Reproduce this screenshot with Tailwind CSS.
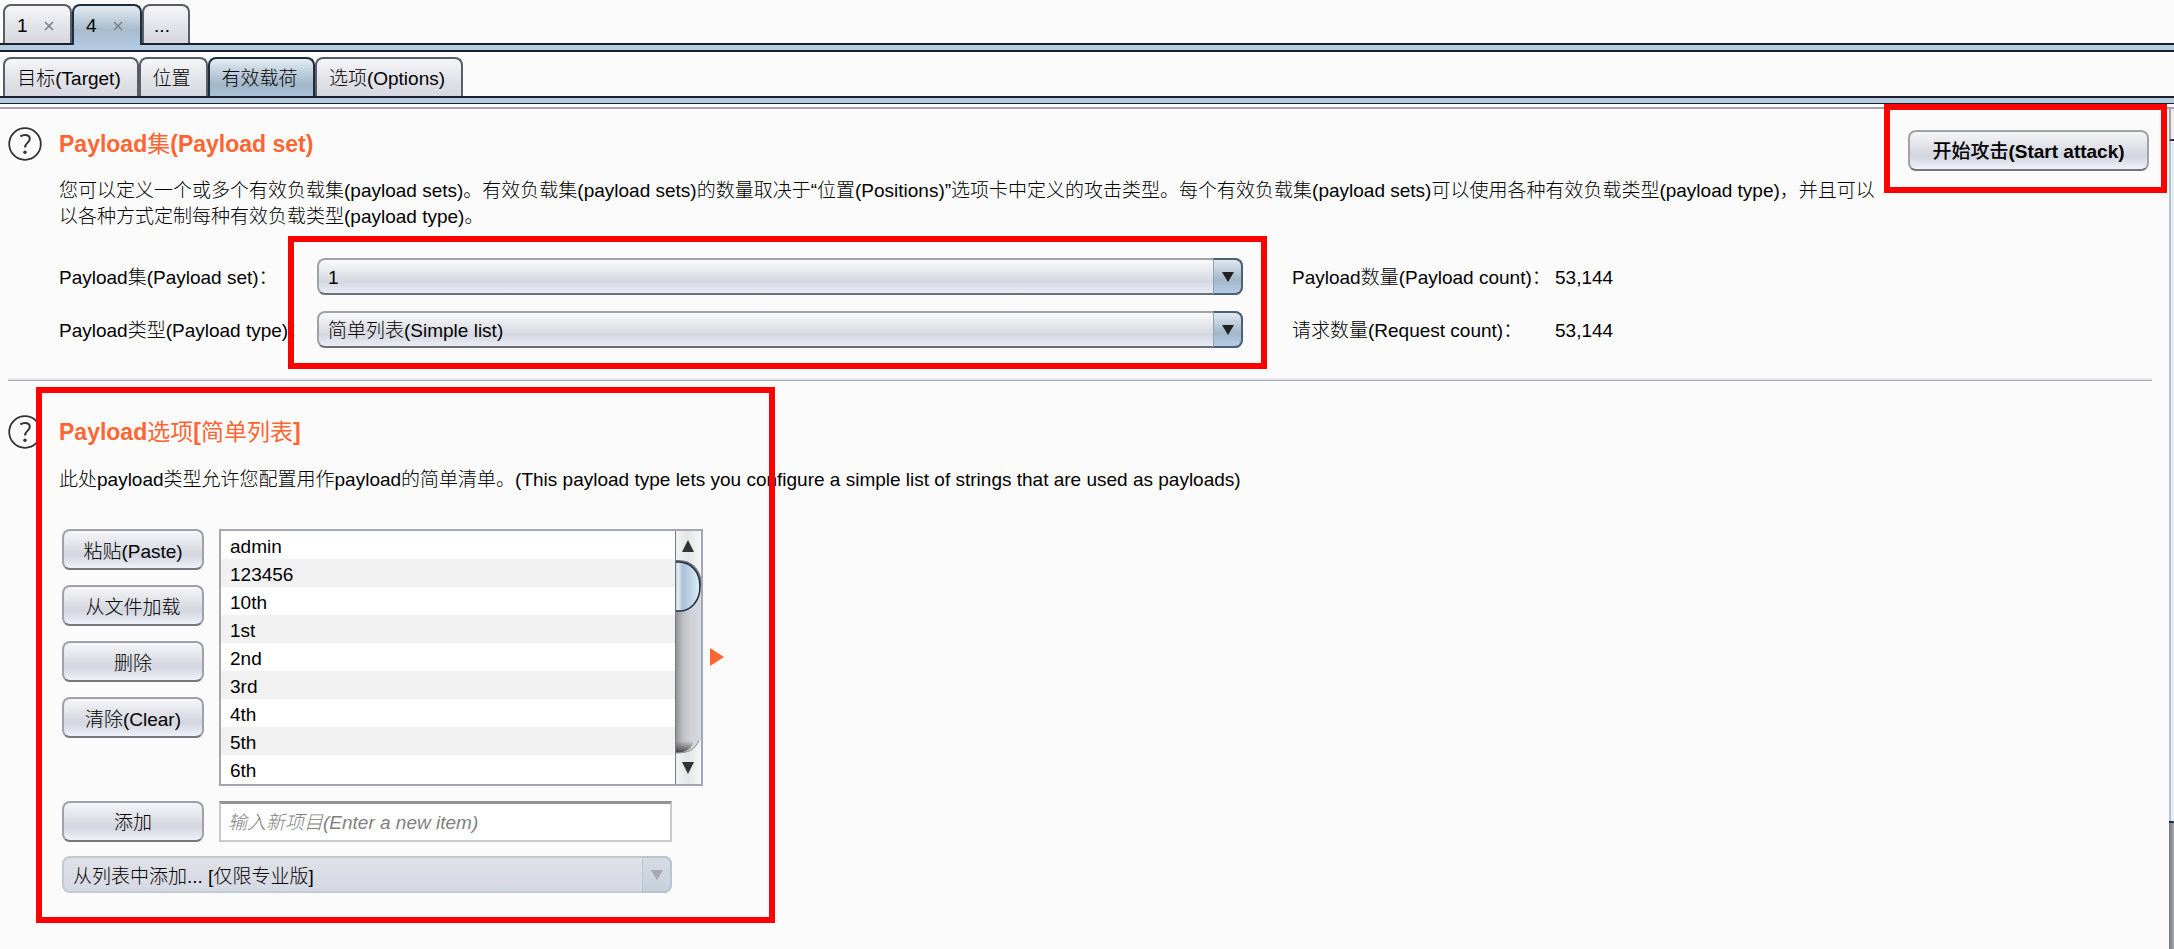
<!DOCTYPE html>
<html lang="zh-CN">
<head>
    <meta charset="UTF-8">
    <meta name="viewport" content="width=device-width, initial-scale=1.0">
    <title>Intruder - Payloads</title>
    <script src="https://cdn.jsdelivr.net/npm/@tailwindcss/browser@4"></script>
    <style>
        body {
            font-family: 'Liberation Sans', 'Noto Sans CJK SC', sans-serif;
        }
    </style>
</head>
<body class="min-h-screen flex flex-col bg-[#fbfbfb] text-black text-[19px] leading-[26px] font-light">
    <!-- Attack tabs -->
    <nav class="flex pt-1 pl-[3px]">
        <button class="h-[39px] w-[69px] flex items-center pl-[12px] pt-[2px] gap-[16px] rounded-t-lg border-2 border-b-0 border-[#5a5c66] bg-linear-to-b from-[#f6f6f8] via-[#e4e5ea] to-[#d6d8df]">
            1
            <svg class="w-[10px] h-[10px]" viewBox="0 0 10 10" stroke="#808080" stroke-width="1.6"><path d="M1 1L9 9M9 1L1 9"/></svg>
        </button>
        <button class="h-[41px] w-[70px] -mb-[2px] relative z-10 flex items-center pl-[12px] gap-[16px] rounded-t-lg border-2 border-b-0 border-[#1c2d40] bg-linear-to-b from-[#e3ebf1] via-[#a9bccd] via-60% to-[#b1c7df]">
            4
            <svg class="w-[10px] h-[10px]" viewBox="0 0 10 10" stroke="#808080" stroke-width="1.6"><path d="M1 1L9 9M9 1L1 9"/></svg>
        </button>
        <button class="h-[39px] w-[48px] flex items-center justify-center pr-2 pt-[2px] rounded-t-lg border-2 border-b-0 border-[#5a5c66] bg-linear-to-b from-[#f6f6f8] via-[#e4e5ea] to-[#d6d8df]">...</button>
    </nav>
    <div class="h-[9px] border-y-2 border-t-[#1a1d2c] border-b-[#1a1d2c] bg-[#b5cce0]"></div>

    <!-- Section tabs -->
    <nav class="flex pt-[5px] pl-[3px]">
        <button class="h-[39px] w-[136px] pt-[2px] pr-1 rounded-t-lg border-2 border-b-0 border-[#5a5c66] bg-linear-to-b from-[#f6f6f8] via-[#e4e5ea] to-[#d6d8df]">目标(Target)</button>
        <button class="h-[39px] w-[69px] pt-[2px] pr-1 rounded-t-lg border-2 border-b-0 border-[#5a5c66] bg-linear-to-b from-[#f6f6f8] via-[#e4e5ea] to-[#d6d8df]">位置</button>
        <button class="h-[39px] w-[107px] pt-[2px] pr-1 rounded-t-lg border-2 border-b-0 border-[#1c2d40] bg-linear-to-b from-[#e3ebf1] via-[#a1b6c9] via-70% to-[#a9c0d6]">有效载荷</button>
        <button class="h-[39px] w-[148px] pt-[2px] pr-1 rounded-t-lg border-2 border-b-0 border-[#5a5c66] bg-linear-to-b from-[#f6f6f8] via-[#e4e5ea] to-[#d6d8df]">选项(Options)</button>
    </nav>
    <div class="h-[8px] border-t-2 border-b border-[#1a1d2c] bg-[#b5cce0]"></div>
    <div class="h-[5px] border-b-2 border-[#a3a3b3] bg-white"></div>

    <div class="flex-1 flex">
        <main class="flex-1 min-w-0 pl-2">
            <!-- Payload sets -->
            <section class="flex">
                <svg class="w-[34px] h-[34px] mt-[18px] shrink-0" viewBox="0 0 34 34" fill="none" stroke="#333">
                    <circle cx="17" cy="17" r="15.8" stroke-width="1.8"/>
                    <path d="M12.3 9.4C14 8.4 15.400 8 17 8C20 8 21.800 9.500 21.800 12C21.800 15.600 17 15.800 17 20.500" stroke-width="2"/>
                    <circle cx="17" cy="25.200" r="1.700" fill="#333" stroke="none"/>
                </svg>
                <div class="flex-1 min-w-0 ml-[17px] pt-[18px]">
                    <h2 class="text-[23px] leading-[34px] font-bold text-[#ff6633]">Payload<span class="font-normal">集</span>(Payload set)</h2>
                    <p class="mt-[17px]">您可以定义一个或多个有效负载集(payload sets)。有效负载集(payload sets)的数量取决于“位置(Positions)”选项卡中定义的攻击类型。每个有效负载集(payload sets)可以使用各种有效负载类型(payload type)，并且可以以各种方式定制每种有效负载类型(payload type)。</p>
                    <div class="flex mt-[28px]">
                        <div class="w-[258px] shrink-0 flex flex-col gap-4 whitespace-nowrap">
                            <label for="payloadSet" class="h-[37px] flex items-center pt-[3px]">Payload集(Payload set)：</label>
                            <label for="payloadType" class="h-[37px] flex items-center pt-[3px]">Payload类型(Payload type)：</label>
                        </div>
                        <div class="relative flex-1 max-w-[926px] flex flex-col gap-4">
                            <div class="relative h-[37px]">
                                <select id="payloadSet" class="appearance-none w-full h-full pl-[9px] pt-[3px] rounded-lg border-2 border-[#a0a2a9] border-b-[#6c6f77] bg-linear-to-b from-[#fafafb] via-[#d5d8e0] via-65% to-[#e9ebf6]">
                                    <option>1</option>
                                </select>
                                <div class="absolute right-0 inset-y-0 w-[30px] flex items-center justify-center pointer-events-none rounded-r-lg border-2 border-l border-[#4b6177] border-l-[#8fa3b5] bg-linear-to-b from-[#e0e9ef] via-[#a3b7c9] via-60% to-[#b5cce4]">
                                    <svg class="w-[12px] h-[10px]" viewBox="0 0 12 10"><path d="M0 0H12L6 10Z" fill="#222"/></svg>
                                </div>
                            </div>
                            <div class="relative h-[37px]">
                                <select id="payloadType" class="appearance-none w-full h-full pl-[9px] pt-[3px] rounded-lg border-2 border-[#a0a2a9] border-b-[#6c6f77] bg-linear-to-b from-[#fafafb] via-[#d5d8e0] via-65% to-[#e9ebf6]">
                                    <option>简单列表(Simple list)</option>
                                </select>
                                <div class="absolute right-0 inset-y-0 w-[30px] flex items-center justify-center pointer-events-none rounded-r-lg border-2 border-l border-[#4b6177] border-l-[#8fa3b5] bg-linear-to-b from-[#e0e9ef] via-[#a3b7c9] via-60% to-[#b5cce4]">
                                    <svg class="w-[12px] h-[10px]" viewBox="0 0 12 10"><path d="M0 0H12L6 10Z" fill="#222"/></svg>
                                </div>
                            </div>
                            <!-- Highlight -->
                            <div class="absolute -left-[29px] -right-[24px] -top-[22px] -bottom-[21px] border-6 border-[#ff0000] pointer-events-none"></div>
                        </div>
                        <dl class="ml-[49px] grid grid-cols-[263px_auto] gap-y-4 whitespace-nowrap">
                            <dt class="h-[37px] flex items-center pt-[3px]">Payload数量(Payload count)：</dt>
                            <dd class="h-[37px] flex items-center pt-[3px]">53,144</dd>
                            <dt class="h-[37px] flex items-center pt-[3px]">请求数量(Request count)：</dt>
                            <dd class="h-[37px] flex items-center pt-[3px]">53,144</dd>
                        </dl>
                    </div>
                </div>
                <div class="relative shrink-0 self-start mt-[21px] ml-[32px] mr-[20px]">
                    <button class="w-[241px] h-[41px] pt-[3px] font-bold rounded-lg border-2 border-[#a0a2a9] border-b-[#75777d] bg-linear-to-b from-[#f5f5f7] via-[#d3d6de] via-65% to-[#eff1fb]"><span class="font-medium">开始攻击</span>(Start attack)</button>
                    <!-- Highlight -->
                    <div class="absolute -left-[24px] -right-[18px] -top-[26px] -bottom-[22px] border-6 border-[#ff0000] pointer-events-none"></div>
                </div>
            </section>

            <hr class="mt-[30px] mr-[17px] h-[3px] border-t-2 border-b border-t-[#e6e7ea] border-b-[#a2a5b0]">

            <!-- Payload options -->
            <section class="flex pt-[34px]">
                <svg class="w-[34px] h-[34px] shrink-0" viewBox="0 0 34 34" fill="none" stroke="#333">
                    <circle cx="17" cy="17" r="15.8" stroke-width="1.8"/>
                    <path d="M12.3 9.4C14 8.4 15.400 8 17 8C20 8 21.800 9.500 21.800 12C21.800 15.600 17 15.800 17 20.500" stroke-width="2"/>
                    <circle cx="17" cy="25.200" r="1.700" fill="#333" stroke="none"/>
                </svg>
                <div class="relative flex-1 ml-[17px]">
                    <h2 class="text-[23px] leading-[34px] font-bold text-[#ff6633]">Payload<span class="font-normal">选项</span>[<span class="font-normal">简单列表</span>]</h2>
                    <p class="mt-[18px]">此处payload类型允许您配置用作payload的简单清单。(This payload type lets you configure a simple list of strings that are used as payloads)</p>

                    <div class="flex mt-[36px] ml-[3px]">
                        <div class="flex flex-col gap-[15px] w-[142px]">
                            <button class="h-[41px] pt-1 rounded-lg border-2 border-[#a0a2a9] border-b-[#75777d] bg-linear-to-b from-[#f5f5f7] via-[#d3d6de] via-65% to-[#eff1fb]">粘贴(Paste)</button>
                            <button class="h-[41px] pt-1 rounded-lg border-2 border-[#a0a2a9] border-b-[#75777d] bg-linear-to-b from-[#f5f5f7] via-[#d3d6de] via-65% to-[#eff1fb]">从文件加载</button>
                            <button class="h-[41px] pt-1 rounded-lg border-2 border-[#a0a2a9] border-b-[#75777d] bg-linear-to-b from-[#f5f5f7] via-[#d3d6de] via-65% to-[#eff1fb]">删除</button>
                            <button class="h-[41px] pt-1 rounded-lg border-2 border-[#a0a2a9] border-b-[#75777d] bg-linear-to-b from-[#f5f5f7] via-[#d3d6de] via-65% to-[#eff1fb]">清除(Clear)</button>
                        </div>
                        <div class="ml-[15px] w-[484px] h-[257px] flex border-2 border-[#a2a7b3] bg-white">
                            <ul class="flex-1 leading-[28px] overflow-hidden">
                                <li class="h-[28px] pl-[9px] pt-[2px]">admin</li>
                                <li class="h-[28px] pl-[9px] pt-[2px] bg-[#f1f1f1]">123456</li>
                                <li class="h-[28px] pl-[9px] pt-[2px]">10th</li>
                                <li class="h-[28px] pl-[9px] pt-[2px] bg-[#f1f1f1]">1st</li>
                                <li class="h-[28px] pl-[9px] pt-[2px]">2nd</li>
                                <li class="h-[28px] pl-[9px] pt-[2px] bg-[#f1f1f1]">3rd</li>
                                <li class="h-[28px] pl-[9px] pt-[2px]">4th</li>
                                <li class="h-[28px] pl-[9px] pt-[2px] bg-[#f1f1f1]">5th</li>
                                <li class="h-[28px] pl-[9px] pt-[2px]">6th</li>
                            </ul>
                            <!-- List scrollbar -->
                            <svg class="w-[26px] h-[253px] shrink-0" viewBox="0 0 26 253">
                                <defs>
                                    <linearGradient id="track"><stop offset="0" stop-color="#8c8d91"/><stop offset=".3" stop-color="#bfc0c4"/><stop offset=".6" stop-color="#d0d1d6"/><stop offset="1" stop-color="#d5d9e3"/></linearGradient>
                                    <linearGradient id="thumb"><stop offset="0" stop-color="#a4b9cf"/><stop offset=".12" stop-color="#e8f0f6"/><stop offset=".3" stop-color="#acc1d6"/><stop offset=".65" stop-color="#c2d5e6"/><stop offset="1" stop-color="#e2f2fb"/></linearGradient>
                                    <linearGradient id="arrowBtn"><stop offset="0" stop-color="#f3f4f5"/><stop offset=".5" stop-color="#e3e5e7"/><stop offset="1" stop-color="#f4f6f8"/></linearGradient>
                                    <linearGradient id="shade" x1="0" y1="0" x2="0" y2="1"><stop offset="0" stop-color="#444" stop-opacity="0"/><stop offset="1" stop-color="#333" stop-opacity=".9"/></linearGradient>
                                </defs>
                                <rect width="26" height="253" fill="url(#track)"/>
                                <path d="M0 0H26V48C25 38 15 30 0 30Z" fill="url(#arrowBtn)"/>
                                <path d="M0 30H4C15 30 26 38 26 55" fill="none" stroke="#777" stroke-width="2"/>
                                <path d="M0 210H18C18 216 12 222 0 222Z" fill="url(#shade)"/>
                                <path d="M0 222C14 222 20 219 24 209H26V253H0Z" fill="url(#arrowBtn)"/>
                                <path d="M0 222C14 222 20 219 24 209" fill="none" stroke="#8a8b90"/>
                                <path d="M0 31H4C16 31 25 41 25 55.500C25 70 16 80 4 80H0Z" fill="url(#thumb)"/>
                                <path d="M0 31H4C16 31 25 41 25 55.500C25 70 16 80 4 80H0" fill="none" stroke="#1f3347" stroke-width="1.600"/>
                                <path d="M.5 0V253" stroke="#77797d"/>
                                <path d="M13 9L19 21H7Z" fill="#333"/>
                                <path d="M13 243L19 231H7Z" fill="#333"/>
                            </svg>
                        </div>
                        <svg class="ml-[7px] mt-[119px] w-[14px] h-[18px]" viewBox="0 0 14 18"><path d="M0 0L14 9L0 18Z" fill="#ff6633"/></svg>
                    </div>

                    <div class="flex mt-[15px] ml-[3px]">
                        <button class="h-[41px] w-[142px] pt-[2px] rounded-lg border-2 border-[#a0a2a9] border-b-[#75777d] bg-linear-to-b from-[#f5f5f7] via-[#d3d6de] via-65% to-[#eff1fb]">添加</button>
                        <input type="text" aria-label="输入新项目" placeholder="输入新项目(Enter a new item)" class="ml-[15px] w-[453px] h-[41px] px-[7px] pt-[2px] bg-white border-2 border-[#c8c9cc] border-t-3 border-t-[#949498] italic placeholder:text-[#808080]">
                    </div>

                    <div class="relative mt-[14px] ml-[3px] w-[610px] h-[37px]">
                        <select disabled aria-label="从列表中添加" class="appearance-none w-full h-full pl-[9px] pt-1 rounded-lg border-2 border-[#c3c7d1] bg-linear-to-b from-[#e0e1e6] to-[#d5d9e3] text-black opacity-100">
                            <option>从列表中添加... [仅限专业版]</option>
                        </select>
                        <div class="absolute right-0 inset-y-0 w-[30px] flex items-center justify-center pointer-events-none rounded-r-lg border-2 border-l border-[#bac5d2] bg-linear-to-b from-[#d6dce4] to-[#c6cfdb]">
                            <svg class="w-[12px] h-[10px]" viewBox="0 0 12 10"><path d="M0 0H12L6 10Z" fill="#a2a9b3"/></svg>
                        </div>
                    </div>
                    <!-- Highlight -->
                    <div class="absolute -left-[23px] w-[739px] -top-[28px] -bottom-[30px] border-6 border-[#ff0000] pointer-events-none"></div>
                </div>
            </section>
        </main>

        <!-- Page scrollbar -->
        <div class="w-[5px] flex flex-col border-l-2 border-[#b5c3d1] bg-[#e6eef5]">
            <div class="h-[32px] -ml-[2px] border-l-2 border-b-2 border-l-[#a0a2a9] border-b-[#1f3347] bg-[#eeeff1]"></div>
            <div class="h-[680px]"></div>
            <div class="flex-1 -ml-[2px] border-t-2 border-[#1f3347] bg-linear-to-r from-[#77797d] to-[#a5a8af]"></div>
        </div>
    </div>
</body>
</html>
